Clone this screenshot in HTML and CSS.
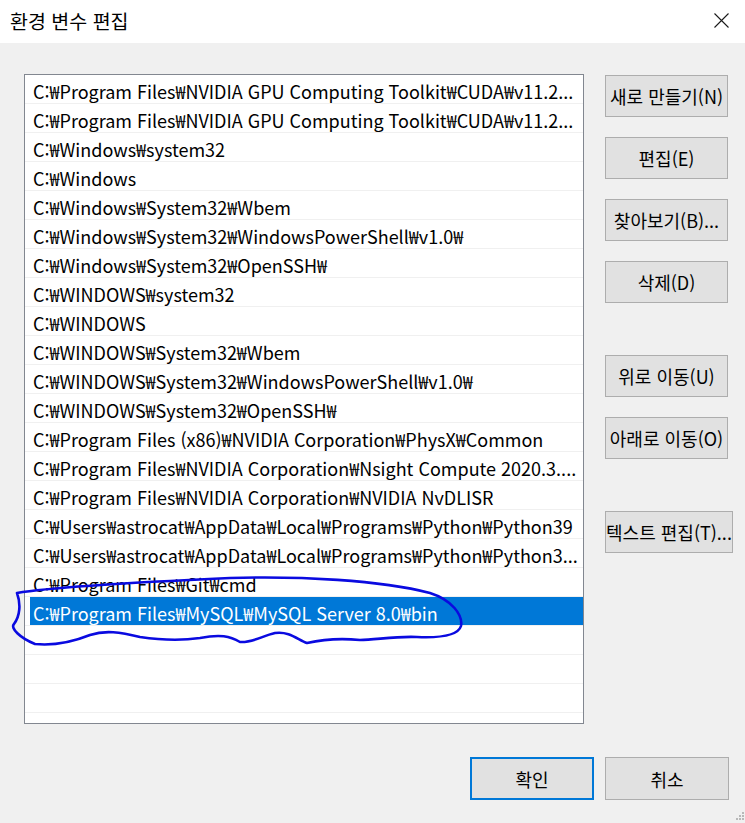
FILE: index.html
```html
<!DOCTYPE html>
<html lang="ko">
<head>
    <meta charset="UTF-8">
    <title>환경 변수 편집</title>
    <link rel="stylesheet" href="styles.css">
</head>
<body>
    <div class="window">
        <div class="titlebar">
            <span class="title">환경 변수 편집</span>
            <svg class="close" width="15" height="15" viewBox="0 0 15 15">
                <path d="M0.5 0.5 L14.5 14.5 M14.5 0.5 L0.5 14.5" stroke="#1a1a1a" stroke-width="1.1" fill="none"/>
            </svg>
        </div>

        <div class="content">
            <div class="list">
                <div class="row"><span class="cell">C:₩Program Files₩NVIDIA GPU Computing Toolkit₩CUDA₩v11.2...</span></div>
                <div class="row"><span class="cell">C:₩Program Files₩NVIDIA GPU Computing Toolkit₩CUDA₩v11.2...</span></div>
                <div class="row"><span class="cell">C:₩Windows₩system32</span></div>
                <div class="row"><span class="cell">C:₩Windows</span></div>
                <div class="row"><span class="cell">C:₩Windows₩System32₩Wbem</span></div>
                <div class="row"><span class="cell">C:₩Windows₩System32₩WindowsPowerShell₩v1.0₩</span></div>
                <div class="row"><span class="cell">C:₩Windows₩System32₩OpenSSH₩</span></div>
                <div class="row"><span class="cell">C:₩WINDOWS₩system32</span></div>
                <div class="row"><span class="cell">C:₩WINDOWS</span></div>
                <div class="row"><span class="cell">C:₩WINDOWS₩System32₩Wbem</span></div>
                <div class="row"><span class="cell">C:₩WINDOWS₩System32₩WindowsPowerShell₩v1.0₩</span></div>
                <div class="row"><span class="cell">C:₩WINDOWS₩System32₩OpenSSH₩</span></div>
                <div class="row"><span class="cell">C:₩Program Files (x86)₩NVIDIA Corporation₩PhysX₩Common</span></div>
                <div class="row"><span class="cell">C:₩Program Files₩NVIDIA Corporation₩Nsight Compute 2020.3....</span></div>
                <div class="row"><span class="cell">C:₩Program Files₩NVIDIA Corporation₩NVIDIA NvDLISR</span></div>
                <div class="row"><span class="cell">C:₩Users₩astrocat₩AppData₩Local₩Programs₩Python₩Python39</span></div>
                <div class="row"><span class="cell">C:₩Users₩astrocat₩AppData₩Local₩Programs₩Python₩Python3...</span></div>
                <div class="row"><span class="cell">C:₩Program Files₩Git₩cmd</span></div>
                <div class="row"><span class="cell selected">C:₩Program Files₩MySQL₩MySQL Server 8.0₩bin</span></div>
                <div class="row"><span class="cell"></span></div>
                <div class="row"><span class="cell"></span></div>
                <div class="row"><span class="cell"></span></div>
            </div>

            <div class="side">
                <button class="btn first">새로 만들기(N)</button>
                <button class="btn">편집(E)</button>
                <button class="btn">찾아보기(B)...</button>
                <button class="btn">삭제(D)</button>
                <button class="btn group">위로 이동(U)</button>
                <button class="btn">아래로 이동(O)</button>
                <button class="btn group wide">텍스트 편집(T)...</button>
            </div>
        </div>

        <div class="footer">
            <button class="btn ok">확인</button>
            <button class="btn">취소</button>
        </div>

        <!-- hand-drawn marker around the selected entry -->
        <svg class="scribble" width="745" height="823" viewBox="0 0 745 823">
            <path d="M17 593 C40 589 120 583 230 578 C300 576 380 580 430 593 C452 600 463 615 461 626 C458 636 440 638 417 637 C395 636 375 640 360 640 C340 638 320 640 307 643 C298 640 290 631 275 633 C262 636 252 643 240 642 C230 636 220 634 200 638 C180 641 160 640 140 637 C120 632 105 630 90 635 C75 641 55 646 35 644 C20 638 10 628 14 624 C20 616 21 604 17 593"
                  fill="none" stroke="#0a0ae0" stroke-width="2.6" stroke-linecap="round" stroke-linejoin="round"/>
        </svg>

        <svg class="grip" width="12" height="12" viewBox="0 0 12 12">
            <rect x="9" y="1" width="2" height="2" fill="#b8b8b8"/>
            <rect x="6" y="4" width="2" height="2" fill="#b8b8b8"/>
            <rect x="9" y="4" width="2" height="2" fill="#b8b8b8"/>
            <rect x="3" y="7" width="2" height="2" fill="#b8b8b8"/>
            <rect x="6" y="7" width="2" height="2" fill="#b8b8b8"/>
            <rect x="9" y="7" width="2" height="2" fill="#b8b8b8"/>
        </svg>
    </div>
</body>
</html>
```

FILE: styles.css
```css
body {
    margin: 0;
    font-family: "Noto Sans CJK KR", "Noto Sans", sans-serif;
    color: #000;
}
.window {
    position: relative;
    width: 745px;
    height: 823px;
    background: #f0f0f0;
    overflow: hidden;
}
.titlebar {
    height: 43px;
    background: #fff;
    display: flex;
    align-items: center;
    justify-content: space-between;
    padding: 0 16px 0 10px;
}
.title {
    font-size: 19.5px;
    margin-top: -2px;
}
.close {
    margin-top: -3px;
}
.content {
    display: flex;
    gap: 21px;
    padding: 31px 0 0 24px;
}
.list {
    width: 560px;
    height: 650px;
    box-sizing: border-box;
    border: 1px solid #828790;
    background: #fff;
    overflow: hidden;
}
.row {
    height: 29px;
    box-sizing: border-box;
    border-bottom: 1px solid #f0f0f0;
    padding-left: 5px;
}
.cell {
    display: block;
    height: 23px;
    padding: 5px 0 0 3px;
    line-height: 23px;
    font-size: 18px;
    white-space: nowrap;
    overflow: hidden;
}
.cell.selected {
    background: #0078d7;
    color: #fff;
}
.side {
    display: flex;
    flex-direction: column;
    align-items: flex-start;
}
.btn {
    width: 123px;
    height: 42px;
    margin: 20px 0 0;
    padding: 0;
    background: #e1e1e1;
    border: 1px solid #adadad;
    font-family: "Noto Sans CJK KR", "Noto Sans", sans-serif;
    font-size: 18px;
    color: #000;
    white-space: nowrap;
}
.btn.first {
    margin-top: 1px;
}
.btn.group {
    margin-top: 52px;
}
.btn.wide {
    width: 128px;
}
.footer {
    display: flex;
    justify-content: flex-end;
    gap: 11px;
    padding: 33px 16px 0 0;
}
.footer .btn {
    width: 124px;
    height: 43px;
    margin: 0;
}
.btn.ok {
    border: 2px solid #0078d7;
}
.scribble {
    position: absolute;
    left: 0;
    top: 0;
    pointer-events: none;
}
.grip {
    position: absolute;
    right: 0;
    bottom: 0;
}
```
